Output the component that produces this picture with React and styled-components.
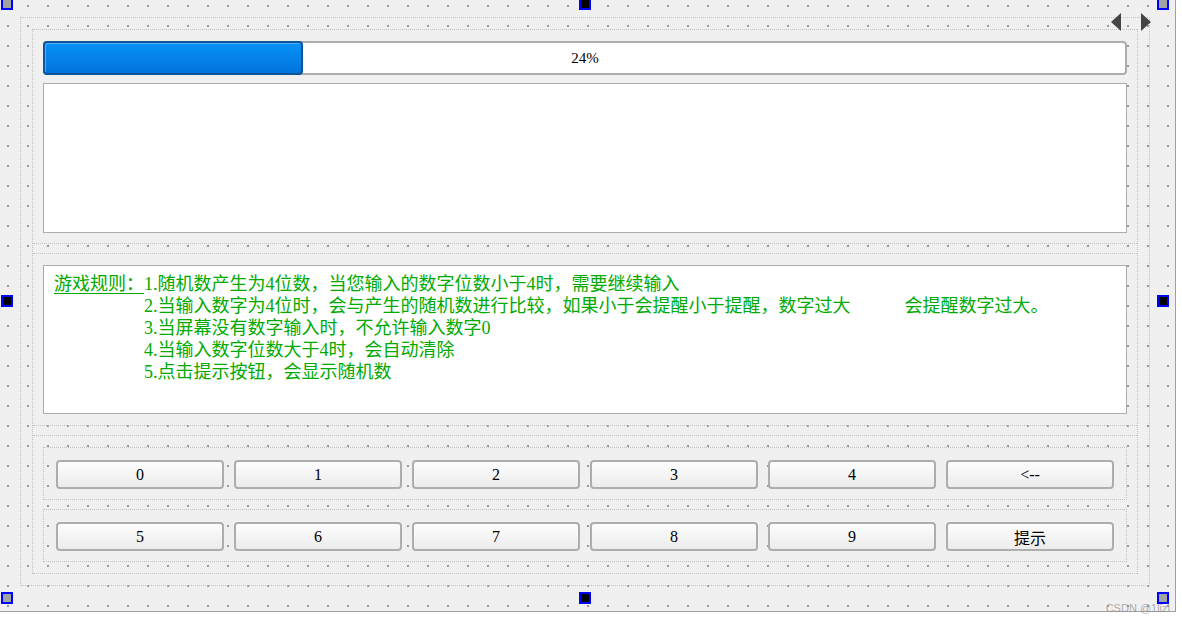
import React from 'react';
import styled, { createGlobalStyle } from 'styled-components';

const GlobalStyle = createGlobalStyle`
    body {
        margin: 0;
        background: #ffffff;
    }
`

const Canvas = styled.div`
    position: relative;
    width: 1182px;
    height: 623px;
    overflow: hidden;
    background: #ffffff;
`

const Form = styled.div`
    box-sizing: border-box;
    width: 1176px;
    height: 612px;
    padding: 17px 0 0 20px;
    border-right: 1px solid #a0a0a0;
    border-bottom: 1px solid #a0a0a0;
    background-color: #f0f0f0;
    background-image: radial-gradient(circle, #9a9a9a 0.9px, transparent 1.2px);
    background-size: 20px 20px;
    background-position: -2px -4px;
`

const OuterLayout = styled.div`
    box-sizing: border-box;
    width: 1130px;
    height: 569px;
    padding: 11px;
    border: 1px dotted #c2c2c2;
`

const InnerLayout = styled.div`
    box-sizing: border-box;
    width: 1106px;
    height: 545px;
    display: flex;
    flex-direction: column;
    gap: 9px;
    border-left: 1px dotted #c2c2c2;
    border-right: 1px dotted #c2c2c2;
`

const Section = styled.div`
    box-sizing: border-box;
    height: ${p => p.$h}px;
    display: flex;
    flex-direction: column;
    gap: ${p => p.$gap || 0}px;
    padding: 11px 10px 0 10px;
    border-top: 1px dotted #c2c2c2;
    border-bottom: 1px dotted #c2c2c2;
`

const ProgressBar = styled.div`
    display: grid;
    height: 34px;
    background: #ffffff;
    border-radius: 4px;
    font-family: "Liberation Serif", "Noto Sans CJK SC", serif;
    font-size: 15px;
    color: #000;
`

const Track = styled.div`
    grid-area: 1 / 1;
    border: 2px solid #adadad;
    border-radius: 4px;
`

const Chunk = styled.div`
    grid-area: 1 / 1;
    justify-self: start;
    box-sizing: border-box;
    border: 2px solid #0d5597;
    border-radius: 4px;
    background: linear-gradient(#0891f7, #0074dc);
    box-shadow: inset 1px 1px 0 #4aaeff;
`

const ProgressLabel = styled.div`
    grid-area: 1 / 1;
    display: flex;
    align-items: center;
    justify-content: center;
`

const WhiteBox = styled.div`
    box-sizing: border-box;
    height: ${p => p.$h}px;
    background: #ffffff;
    border: 1px solid #adadad;
`

const Rules = styled(WhiteBox)`
    display: grid;
    grid-template-columns: auto auto;
    justify-content: start;
    align-content: start;
    padding: 7px 10px;
    font-family: "Liberation Serif", "Noto Sans CJK SC", serif;
    font-size: 18px;
    line-height: 22px;
    color: #00aa00;
    white-space: pre;
`

const RulesTitle = styled.span`
    text-decoration: underline;
    text-underline-offset: 3px;
`

const RulesList = styled.div`
    display: flex;
    flex-direction: column;
`

const ButtonRow = styled.div`
    box-sizing: border-box;
    height: 53px;
    display: flex;
    align-items: center;
    gap: 10px;
    padding: 2px 12px 0 12px;
    border: 1px dotted #c2c2c2;
`

const KeyButton = styled.button`
    box-sizing: border-box;
    width: 168px;
    height: 29px;
    padding: 0;
    border: 2px solid #adadad;
    border-radius: 4px;
    background: linear-gradient(#fdfdfd, #ececec);
    font-family: "Liberation Serif", "Noto Sans CJK SC", serif;
    font-size: 16px;
    color: #000;
`

const Handle = styled.div`
    position: absolute;
    left: ${p => p.$x}px;
    top: ${p => p.$y}px;
    box-sizing: border-box;
    width: 12px;
    height: 12px;
    border: 2px solid #0000ff;
    background: ${p => (p.$corner ? '#a3a3a3' : '#000000')};
`

const PageArrows = styled.div`
    position: absolute;
    left: 1108px;
    top: 12px;
    display: flex;
    gap: 14px;
`

const Watermark = styled.div`
    position: absolute;
    right: 12px;
    top: 602px;
    font-family: "Liberation Sans", Arial, sans-serif;
    font-size: 11px;
    color: rgba(140, 140, 140, 0.7);
`

const row1 = ['0', '1', '2', '3', '4', '<--']
const row2 = ['5', '6', '7', '8', '9', '提示']

const rules = [
    '1.随机数产生为4位数，当您输入的数字位数小于4时，需要继续输入',
    '2.当输入数字为4位时，会与产生的随机数进行比较，如果小于会提醒小于提醒，数字过大\u3000\u3000\u3000会提醒数字过大。',
    '3.当屏幕没有数字输入时，不允许输入数字0',
    '4.当输入数字位数大于4时，会自动清除',
    '5.点击提示按钮，会显示随机数',
]

const handles = [
    { x: 1, y: -2, corner: true },
    { x: 579, y: -2 },
    { x: 1157, y: -2, corner: true },
    { x: 1, y: 295 },
    { x: 1157, y: 295 },
    { x: 1, y: 592, corner: true },
    { x: 579, y: 592 },
    { x: 1157, y: 592, corner: true },
]

function App() {
    const value = 24

    return (
        <Canvas>
            <GlobalStyle />
            <Form>
                <OuterLayout>
                    <InnerLayout>
                        <Section $h={215} $gap={8}>
                            <ProgressBar>
                                <Track />
                                <Chunk style={{ width: value + '%' }} />
                                <ProgressLabel>{value}%</ProgressLabel>
                            </ProgressBar>
                            <WhiteBox $h={150} />
                        </Section>
                        <Section $h={173}>
                            <Rules $h={149}>
                                <RulesTitle>游戏规则：</RulesTitle>
                                <RulesList>
                                    {rules.map(line => <span key={line}>{line}</span>)}
                                </RulesList>
                            </Rules>
                        </Section>
                        <Section $h={139} $gap={9}>
                            <ButtonRow>
                                {row1.map(k => <KeyButton key={k}>{k}</KeyButton>)}
                            </ButtonRow>
                            <ButtonRow>
                                {row2.map(k => <KeyButton key={k}>{k}</KeyButton>)}
                            </ButtonRow>
                        </Section>
                    </InnerLayout>
                </OuterLayout>
            </Form>

            <PageArrows>
                <svg width="16" height="20" viewBox="0 0 16 20">
                    <polygon points="13,1 13,19 3,10" fill="#444444" />
                </svg>
                <svg width="16" height="20" viewBox="0 0 16 20">
                    <polygon points="3,1 3,19 13,10" fill="#444444" />
                </svg>
            </PageArrows>

            {handles.map(h => (
                <Handle key={h.x + '-' + h.y} $x={h.x} $y={h.y} $corner={h.corner} />
            ))}

            <Watermark>CSDN @1lizi</Watermark>
        </Canvas>
    );
}

export default App;
